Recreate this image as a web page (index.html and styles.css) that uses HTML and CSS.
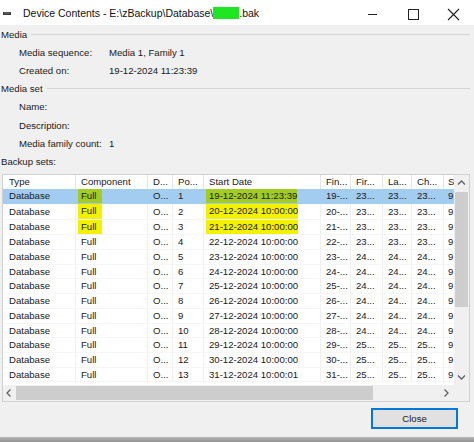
FILE: index.html
```html
<!DOCTYPE html>
<html>
<head>
<meta charset="utf-8">
<link rel="stylesheet" href="styles.css">
</head>
<body>
<div class="window">
  <div class="titlebar">
    <svg class="appicon" width="8" height="5" viewBox="0 0 8 5"><rect x="0" y="1" width="8" height="3" fill="#3a3a3a"/><rect x="1" y="1.5" width="6" height="1" fill="#7a7a7a"/></svg>
    <div class="title">Device Contents - E:\zBackup\Database\<span class="redact"></span>.bak</div>
    <div class="controls">
      <svg class="ctl" width="40" height="24" viewBox="0 0 40 24"><line x1="16" y1="13.5" x2="25" y2="13.5" stroke="#222" stroke-width="1"/></svg>
      <svg class="ctl" width="40" height="24" viewBox="0 0 40 24"><rect x="16.5" y="8.5" width="10" height="10" fill="none" stroke="#222" stroke-width="1"/></svg>
      <svg class="ctl" width="40" height="24" viewBox="0 0 40 24"><path d="M16 8 L27 19 M27 8 L16 19" stroke="#222" stroke-width="1.1" fill="none"/></svg>
    </div>
  </div>
  <div class="content">
    <div class="group"><span>Media</span><span class="rule"></span></div>
    <div class="field"><span class="lbl">Media sequence:</span><span>Media 1, Family 1</span></div>
    <div class="field"><span class="lbl">Created on:</span><span>19-12-2024 11:23:39</span></div>
    <div class="group"><span>Media set</span><span class="rule"></span></div>
    <div class="field"><span class="lbl">Name:</span><span></span></div>
    <div class="field"><span class="lbl">Description:</span><span></span></div>
    <div class="field"><span class="lbl">Media family count:</span><span>1</span></div>
    <div class="group"><span>Backup sets:</span></div>

    <div class="listview">
      <div class="lv-main">
        <div class="lv-grid">
          <table>
            <colgroup>
              <col class="c1"><col class="c2"><col class="c3"><col class="c4"><col class="c5"><col class="c6"><col class="c7"><col class="c8"><col class="c9"><col class="c10">
            </colgroup>
            <thead>
              <tr><th>Type</th><th>Component</th><th>D...</th><th>Po...</th><th>Start Date</th><th>Fin...</th><th>Fir...</th><th>La...</th><th>Ch...</th><th>S</th></tr>
            </thead>
            <tbody>
              <tr class="sel"><td>Database</td><td><span class="mark mark-sel">Full</span></td><td>O...</td><td>1</td><td><span class="mark mark-sel date-mark">19-12-2024 11:23:39</span></td><td>19-...</td><td>23...</td><td>23...</td><td>23...</td><td>9</td></tr>
              <tr><td>Database</td><td><span class="mark">Full</span></td><td>O...</td><td>2</td><td><span class="mark date-mark">20-12-2024 10:00:00</span></td><td>20-...</td><td>23...</td><td>23...</td><td>23...</td><td>9</td></tr>
              <tr><td>Database</td><td><span class="mark">Full</span></td><td>O...</td><td>3</td><td><span class="mark date-mark date-last">21-12-2024 10:00:00</span></td><td>21-...</td><td>23...</td><td>23...</td><td>23...</td><td>9</td></tr>
              <tr><td>Database</td><td>Full</td><td>O...</td><td>4</td><td>22-12-2024 10:00:00</td><td>22-...</td><td>23...</td><td>23...</td><td>23...</td><td>9</td></tr>
              <tr><td>Database</td><td>Full</td><td>O...</td><td>5</td><td>23-12-2024 10:00:00</td><td>23-...</td><td>24...</td><td>24...</td><td>24...</td><td>9</td></tr>
              <tr><td>Database</td><td>Full</td><td>O...</td><td>6</td><td>24-12-2024 10:00:00</td><td>24-...</td><td>24...</td><td>24...</td><td>24...</td><td>9</td></tr>
              <tr><td>Database</td><td>Full</td><td>O...</td><td>7</td><td>25-12-2024 10:00:00</td><td>25-...</td><td>24...</td><td>24...</td><td>24...</td><td>9</td></tr>
              <tr><td>Database</td><td>Full</td><td>O...</td><td>8</td><td>26-12-2024 10:00:00</td><td>26-...</td><td>24...</td><td>24...</td><td>24...</td><td>9</td></tr>
              <tr><td>Database</td><td>Full</td><td>O...</td><td>9</td><td>27-12-2024 10:00:00</td><td>27-...</td><td>24...</td><td>24...</td><td>24...</td><td>9</td></tr>
              <tr><td>Database</td><td>Full</td><td>O...</td><td>10</td><td>28-12-2024 10:00:00</td><td>28-...</td><td>24...</td><td>24...</td><td>24...</td><td>9</td></tr>
              <tr><td>Database</td><td>Full</td><td>O...</td><td>11</td><td>29-12-2024 10:00:00</td><td>29-...</td><td>25...</td><td>25...</td><td>25...</td><td>9</td></tr>
              <tr><td>Database</td><td>Full</td><td>O...</td><td>12</td><td>30-12-2024 10:00:00</td><td>30-...</td><td>25...</td><td>25...</td><td>25...</td><td>9</td></tr>
              <tr><td>Database</td><td>Full</td><td>O...</td><td>13</td><td>31-12-2024 10:00:01</td><td>31-...</td><td>25...</td><td>25...</td><td>25...</td><td>9</td></tr>
            </tbody>
          </table>
        </div>
        <div class="vscroll">
          <svg class="arrow" width="15" height="16" viewBox="0 0 15 16"><path d="M4 9.5 L7.5 6 L11 9.5" stroke="#606060" stroke-width="1.3" fill="none"/></svg>
          <div class="vtrack"><div class="vthumb"></div></div>
          <svg class="arrow" width="15" height="16" viewBox="0 0 15 16"><path d="M4 6.5 L7.5 10 L11 6.5" stroke="#606060" stroke-width="1.3" fill="none"/></svg>
        </div>
      </div>
      <div class="hscroll">
        <svg class="harrow" width="12" height="16" viewBox="0 0 12 16"><path d="M7.5 4.5 L4 8 L7.5 11.5" stroke="#606060" stroke-width="1.3" fill="none"/></svg>
        <div class="htrack"><div class="hthumb"></div></div>
        <svg class="harrow" width="16" height="16" viewBox="0 0 16 16"><path d="M6.5 4.5 L10 8 L6.5 11.5" stroke="#606060" stroke-width="1.3" fill="none"/></svg>
        <div class="corner"></div>
      </div>
    </div>

    <div class="footer">
      <button class="btn">Close</button>
    </div>
  </div>
  <div class="frame-bottom"></div>
</div>
</body>
</html>
```

FILE: styles.css
```css
html, body {
  margin: 0;
  padding: 0;
}
body {
  width: 474px;
  height: 442px;
  overflow: hidden;
  background: #f0f0f0;
  font-family: "Liberation Sans", Arial, sans-serif;
  font-size: 9.6px;
  color: #1a1a1a;
}
.window {
  width: 474px;
  height: 442px;
  display: flex;
  flex-direction: column;
}
.titlebar {
  height: 25px;
  flex: none;
  background: #ffffff;
  display: flex;
  align-items: center;
}
.appicon {
  margin-left: 3px;
  margin-right: 12px;
  margin-top: 1px;
}
.title {
  font-size: 10.5px;
  color: #111;
  flex: 1;
  white-space: nowrap;
  display: flex;
  align-items: center;
  margin-top: 1px;
}
.redact {
  display: inline-block;
  width: 26px;
  height: 12px;
  background: #1ee620;
}
.controls {
  display: flex;
  align-items: center;
  margin-right: 2px;
}
.ctl {
  display: block;
}
.content {
  flex: 1;
  display: flex;
  flex-direction: column;
}
.group {
  height: 18.2px;
  display: flex;
  align-items: center;
  padding-left: 1px;
  gap: 4px;
}
.rule {
  flex: 1;
  height: 1px;
  background: #d4d4d4;
  margin-right: 4px;
}
.field {
  height: 18.2px;
  display: flex;
  align-items: center;
  padding-left: 19px;
}
.lbl {
  width: 90px;
  flex: none;
}
.listview {
  margin: 3px 0 0 2px;
  width: 466px;
  border: 1px solid #d0d0d0;
  background: #ffffff;
}
.lv-main {
  display: flex;
  height: 210px;
}
.lv-grid {
  width: 451px;
  overflow: hidden;
}
table {
  border-collapse: separate;
  border-spacing: 0;
  table-layout: fixed;
  width: 451px;
}
.c1 { width: 73px; }
.c2 { width: 72px; }
.c3 { width: 25px; }
.c4 { width: 31px; }
.c5 { width: 117px; }
.c6 { width: 30px; }
.c7 { width: 32px; }
.c8 { width: 29px; }
.c9 { width: 32px; }
.c10 { width: 10px; }
th, td {
  box-sizing: border-box;
  padding: 0 0 0 5px;
  white-space: nowrap;
  overflow: hidden;
  text-align: left;
  font-weight: normal;
  vertical-align: middle;
}
th {
  height: 14px;
  line-height: 13px;
  border-right: 1px solid #e5e5e5;
  color: #1a1a1a;
}
td {
  height: 14.67px;
  line-height: 13.67px;
  border-right: 1px solid #f0f0f0;
  border-bottom: 1px solid #f6f6f6;
}
th:first-child, td:first-child {
  padding-left: 6px;
}
th:last-child, td:last-child {
  padding-left: 4px;
  border-right: none;
}
tr.sel td {
  background: #a2cdf0;
  border-right-color: #a2cdf0;
  border-bottom-color: #a2cdf0;
}
.mark {
  display: inline-block;
  vertical-align: top;
  background: #f2f200;
  margin-left: -3px;
  padding: 0 6px 0 3px;
  height: 14.67px;
  line-height: 13.67px;
}
.mark-sel {
  background: #a2cc24;
}
.date-mark {
  margin-left: -3px;
  padding-right: 0;
}
.date-last {
  padding-right: 0;
}
.vscroll {
  width: 15px;
  background: #f0f0f0;
  display: flex;
  flex-direction: column;
}
.arrow {
  display: block;
  flex: none;
}
.vtrack {
  flex: 1;
  padding: 1px 1px 0 1px;
}
.vthumb {
  height: 115px;
  background: #cdcdcd;
}
.hscroll {
  height: 16px;
  display: flex;
  background: #f0f0f0;
  align-items: stretch;
}
.harrow {
  display: block;
  flex: none;
}
.htrack {
  width: 423px;
  display: flex;
  align-items: center;
  padding-left: 1px;
}
.hthumb {
  width: 357px;
  height: 14px;
  background: #cdcdcd;
}
.corner {
  width: 15px;
  background: #f0f0f0;
}
.footer {
  display: flex;
  justify-content: flex-end;
  padding: 6px 16px 0 0;
}
.btn {
  width: 87px;
  height: 21px;
  border: 1px solid #0078d7;
  box-shadow: inset 0 0 0 1px #0078d7;
  background: #e1e1e1;
  font-family: "Liberation Sans", Arial, sans-serif;
  font-size: 9.6px;
  color: #1a1a1a;
  padding: 0;
}
.frame-bottom {
  height: 5px;
  flex: none;
  background: linear-gradient(#b8b8b8, #8e8e8e);
}
```
